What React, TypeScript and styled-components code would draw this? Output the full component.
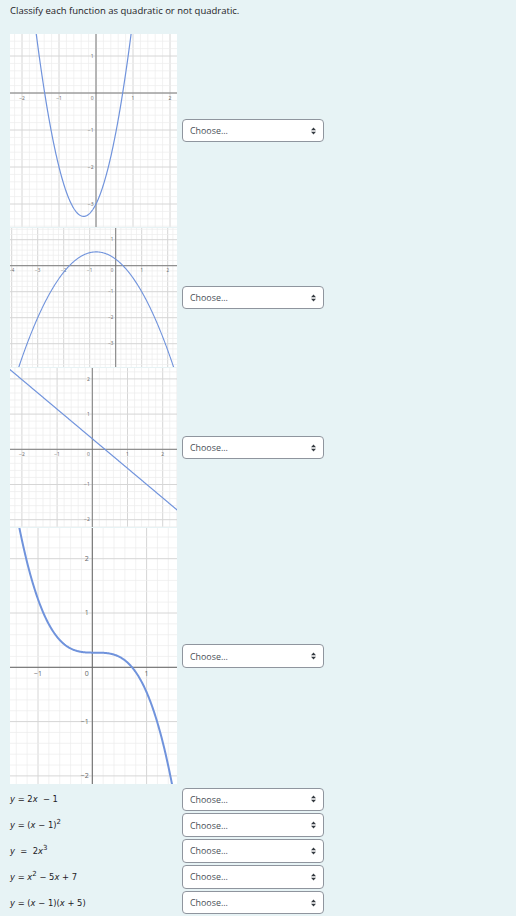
import React from "react";
import styled, { createGlobalStyle } from "styled-components";

const GlobalStyle = createGlobalStyle`
  html, body {
    margin: 0;
    padding: 0;
    background: #e7f3f5;
  }
  body {
    font-family: "Open Sans", "Liberation Sans", sans-serif;
    color: #1d2125;
  }
`;

const GRAPH_W = 167;

type GraphSpec = {
  height: number;
  ox: number;
  oy: number;
  unit: number;
  xLabels: number[];
  yLabels: number[];
  labelSize: number;
  stroke: number;
  fn: (x: number) => number;
};

const graphs: GraphSpec[] = [
  {
    height: 193,
    ox: 86,
    oy: 59,
    unit: 37,
    xLabels: [-2, -1, 0, 1, 2],
    yLabels: [1, -1, -2, -3],
    labelSize: 5,
    stroke: 1.2,
    fn: (x) => 3 * x * x + 2 * x - 3,
  },
  {
    height: 139,
    ox: 105.7,
    oy: 37.7,
    unit: 26,
    xLabels: [-4, -3, -2, -1, 0, 1, 2],
    yLabels: [1, -1, -2, -3],
    labelSize: 4.5,
    stroke: 1.1,
    fn: (x) => -0.5 * x * x - 0.75 * x + 0.25,
  },
  {
    height: 159,
    ox: 82.3,
    oy: 81.3,
    unit: 35.2,
    xLabels: [-2, -1, 0, 1, 2],
    yLabels: [2, 1, -1, -2],
    labelSize: 5,
    stroke: 1.2,
    fn: (x) => -0.84 * x + 0.3,
  },
  {
    height: 256,
    ox: 82.3,
    oy: 139.3,
    unit: 54.3,
    xLabels: [-1, 0, 1],
    yLabels: [2, 1, -1, -2],
    labelSize: 7,
    stroke: 2,
    fn: (x) => -0.85 * Math.pow(x - 0.05, 3) + 0.27,
  },
];

const fmt = (n: number) => (n < 0 ? `\u2212${Math.abs(n)}` : `${n}`);

const Graph = ({ spec }: { spec: GraphSpec }) => {
  const { height: H, ox, oy, unit: u, labelSize: ls } = spec;
  const minor = u / 5;
  const grid: React.ReactNode[] = [];

  for (let k = Math.ceil(-ox / minor); k <= Math.floor((GRAPH_W - ox) / minor); k++) {
    const x = ox + k * minor;
    const major = k % 5 === 0;
    grid.push(
      <line
        key={`v${k}`}
        x1={x}
        x2={x}
        y1={0}
        y2={H}
        stroke={major ? "#d6d6d6" : "#ececec"}
        strokeWidth={major ? 1 : 0.7}
      />
    );
  }
  for (let k = Math.ceil(-oy / minor); k <= Math.floor((H - oy) / minor); k++) {
    const y = oy + k * minor;
    const major = k % 5 === 0;
    grid.push(
      <line
        key={`h${k}`}
        x1={0}
        x2={GRAPH_W}
        y1={y}
        y2={y}
        stroke={major ? "#d6d6d6" : "#ececec"}
        strokeWidth={major ? 1 : 0.7}
      />
    );
  }

  const pts: string[] = [];
  for (let px = -2; px <= GRAPH_W + 2; px += 0.5) {
    const py = oy - spec.fn((px - ox) / u) * u;
    if (py > -60 && py < H + 60) pts.push(`${px.toFixed(2)},${py.toFixed(2)}`);
  }

  return (
    <GraphSvg width={GRAPH_W} height={H} viewBox={`0 0 ${GRAPH_W} ${H}`}>
      <rect width={GRAPH_W} height={H} fill="#fff" />
      {grid}
      <line x1={0} x2={GRAPH_W} y1={oy} y2={oy} stroke="#666" strokeWidth={ls > 6 ? 1 : 0.8} />
      <line x1={ox} x2={ox} y1={0} y2={H} stroke="#666" strokeWidth={ls > 6 ? 1 : 0.8} />
      {spec.xLabels.map((n) => (
        <text
          key={`xl${n}`}
          x={n === 0 ? ox - ls * 0.5 : ox + n * u}
          y={oy + ls + 2}
          fontSize={ls}
          textAnchor={n === 0 ? "end" : "middle"}
        >
          {fmt(n)}
        </text>
      ))}
      {spec.yLabels.map((n) => (
        <text
          key={`yl${n}`}
          x={ox - ls * 0.5}
          y={oy - n * u + ls * 0.35}
          fontSize={ls}
          textAnchor="end"
        >
          {fmt(n)}
        </text>
      ))}
      <polyline points={pts.join(" ")} fill="none" stroke="#7093dc" strokeWidth={spec.stroke} />
    </GraphSvg>
  );
};

const SortIcon = () => (
  <svg width="5" height="8" viewBox="0 0 5 8">
    <path d="M0 3.3 L2.5 0.4 L5 3.3Z M0 4.7 L2.5 7.6 L5 4.7Z" fill="#343a40" />
  </svg>
);

const Choose = () => (
  <Select>
    <span>Choose...</span>
    <SortIcon />
  </Select>
);

const renderEquations = (): React.ReactNode[] => [
  <>
    <Var>y</Var> = 2<Var>x</Var>&nbsp; − 1
  </>,
  <>
    <Var>y</Var> = (<Var>x</Var> − 1)<Sup>2</Sup>
  </>,
  <>
    <Var>y</Var>&nbsp; = &nbsp;2<Var>x</Var>
    <Sup>3</Sup>
  </>,
  <>
    <Var>y</Var> = <Var>x</Var>
    <Sup>2</Sup> − 5<Var>x</Var> + 7
  </>,
  <>
    <Var>y</Var> = (<Var>x</Var> − 1)(<Var>x</Var> + 5)
  </>,
];

export default function App() {
  return (
    <>
      <GlobalStyle />
      <Page>
        <Prompt>Classify each function as quadratic or not quadratic.</Prompt>
        <Table>
          {graphs.map((g, i) => (
            <GraphRow key={i}>
              <Graph spec={g} />
              <Choose />
            </GraphRow>
          ))}
          <TextRows>
            {renderEquations().map((eq, i) => (
              <TextRow key={i}>
                <Equation>{eq}</Equation>
                <Choose />
              </TextRow>
            ))}
          </TextRows>
        </Table>
      </Page>
    </>
  );
}

const Page = styled.div`
  padding: 5px 10px 0 10px;
`;

const Prompt = styled.div`
  font-size: 9.5px;
  line-height: 12px;
  margin-bottom: 17px;
`;

const Table = styled.div`
  display: flex;
  flex-direction: column;
`;

const GraphRow = styled.div`
  display: grid;
  grid-template-columns: ${GRAPH_W}px 142px;
  column-gap: 5px;
  align-items: center;
  margin-bottom: 1px;
`;

const GraphSvg = styled.svg`
  display: block;

  text {
    font-family: "Open Sans", "Liberation Sans", sans-serif;
    fill: #666;
  }
`;

const TextRows = styled.div`
  display: flex;
  flex-direction: column;
  padding-top: 1.5px;
`;

const TextRow = styled.div`
  display: grid;
  grid-template-columns: ${GRAPH_W}px 142px;
  column-gap: 5px;
  align-items: center;
  height: 25.8px;
`;

const Equation = styled.div`
  font-family: "DejaVu Sans", Verdana, sans-serif;
  font-size: 8.4px;
  color: #1d2125;
  white-space: pre;
`;

const Var = styled.i`
  font-style: italic;
`;

const Sup = styled.sup`
  font-size: 7px;
  line-height: 0;
`;

const Select = styled.div`
  box-sizing: border-box;
  width: 142px;
  height: 23.5px;
  border: 1px solid #8f959e;
  border-radius: 4px;
  background: #fff;
  display: flex;
  align-items: center;
  justify-content: space-between;
  padding: 0 7px 0 7px;
  font-size: 8.9px;
  color: #495057;
`;
